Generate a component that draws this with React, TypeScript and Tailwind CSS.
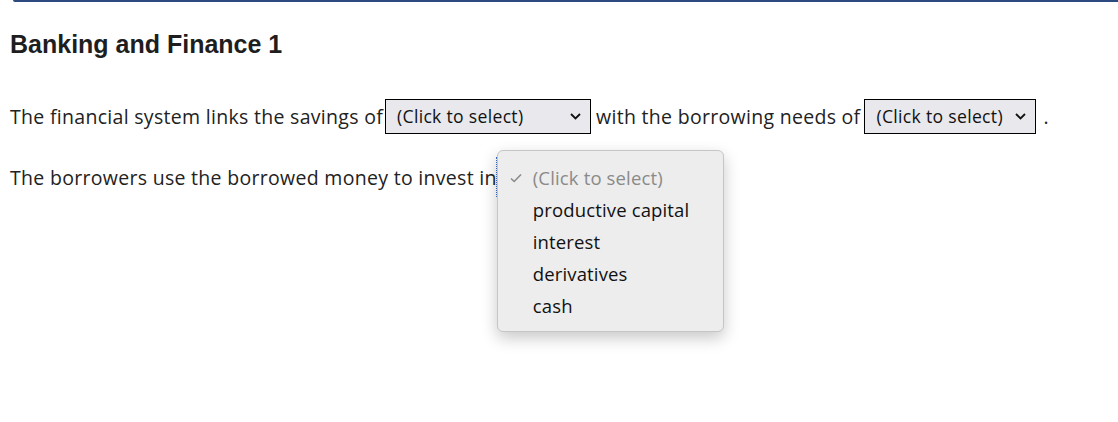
import React from "react";

const options = ["(Click to select)", "productive capital", "interest", "derivatives", "cash"];

const Chevron = () => (
  <svg width="11" height="7" viewBox="0 0 11 7" className="shrink-0">
    <path d="M1 1l4.5 4.5L10 1" fill="none" stroke="#111" strokeWidth="1.8" />
  </svg>
);

const FakeSelect = ({ className }: { className: string }) => (
  <span
    className={`inline-flex items-center justify-between h-[35px] border border-black bg-[#e8e8ed] pl-[11px] pr-[9px] align-middle text-[17.6px] tracking-[0.3px] text-[#111] ${className}`}
  >
    <span>(Click to select)</span>
    <Chevron />
  </span>
);

export default function App() {
  return (
    <div className="w-[1118px] h-[422px] bg-white font-['Open_Sans',Arial,sans-serif] text-[#222] overflow-hidden">
      <div className="ml-[13px] h-[2px] border-b-2 border-l border-[#2c4a80] rounded-bl-[3px]" />

      <div className="px-[10px]">
        <h1 className="mt-[28px] font-['Liberation_Sans',Arial,sans-serif] text-[25px] font-bold text-[#1e1e1e] leading-[28px]">
          Banking and Finance 1
        </h1>

        <p className="mt-[41px] text-[19.5px] tracking-[0.3px] leading-[35px] flex items-center">
          <span>The financial system links the savings of</span>
          <FakeSelect className="w-[206px] ml-[2px] mr-[5px]" />
          <span>with the borrowing needs of</span>
          <FakeSelect className="w-[172px] ml-[4px]" />
          <span className="ml-[7px]">.</span>
        </p>

        <div className="mt-[24px] text-[19.5px] tracking-[0.3px] leading-[35px] flex items-center">
          <span>The borrowers use the borrowed money to invest in</span>
          <span className="relative inline-block h-[38px] w-[200px] outline-dotted outline-[1.5px] outline-[#3a6fc4]">
            <div className="absolute left-0 top-[-8px] w-[227px] h-[182px] rounded-[6px] border border-[#c6c6c6] bg-[#ededed] shadow-[0_6px_16px_rgba(0,0,0,0.22)] pt-[11px] tracking-[0.15px]">
              {options.map((o, i) => (
                <div key={o} className="flex items-center h-[32px] text-[18.5px] leading-none">
                  <span className="w-[35px] flex justify-center pl-[2px]">
                    {i === 0 && (
                      <svg width="12" height="10" viewBox="0 0 12 10">
                        <path d="M1 5.5l3.2 3L11 1.5" fill="none" stroke="#8a8a8a" strokeWidth="1.6" />
                      </svg>
                    )}
                  </span>
                  <span className={i === 0 ? "text-[#8a8a8a]" : "text-[#111]"}>{o}</span>
                </div>
              ))}
            </div>
          </span>
        </div>
      </div>
    </div>
  );
}
